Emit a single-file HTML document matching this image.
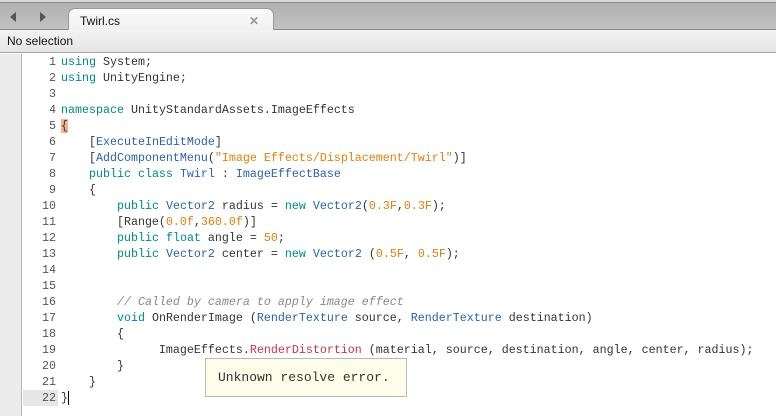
<!DOCTYPE html>
<html><head><meta charset="utf-8"><style>
*{margin:0;padding:0;box-sizing:border-box}
body{width:776px;height:416px;overflow:hidden;background:#fff;position:relative;font-family:"Liberation Sans",sans-serif}
#top{position:absolute;left:0;top:0;width:776px;height:30px;background:linear-gradient(#b0b0b0,#c2c2c2);border-top:2px solid #d8d8d8;box-shadow:inset 0 1px 0 #8a8a8a;border-bottom:1px solid #888}
#tab{position:absolute;left:68px;top:6px;width:206px;height:24px;background:linear-gradient(#fafafa,#f0f0f0);border:1px solid #999;border-bottom:none;border-radius:7px 7px 0 0;font-size:12px;color:#111;padding:5px 0 0 11px}
#tab .x{position:absolute;right:14px;top:5px;color:#999;font-weight:bold;font-size:12px}
.arr{position:absolute;top:10px;width:0;height:0;border-top:5px solid transparent;border-bottom:5px solid transparent}
#info{position:absolute;left:0;top:30px;width:776px;height:23px;background:linear-gradient(#f3f3f3,#e5e5e5);border-bottom:1px solid #a8a8a8;font-size:12px;color:#111;padding:4px 0 0 7px}
#gut{position:absolute;left:0;top:54px;width:22px;height:362px;background:#ececec;border-right:1px solid #b8b8b8}
#nums{position:absolute;left:23px;top:54px;width:33px;font:11.66px/16px "Liberation Mono",monospace;color:#555;text-align:right}
#hl{position:absolute;left:23px;top:390px;width:35px;height:16px;background:#e6e6e6}
#code{position:absolute;left:61px;top:54px;font:11.66px/16px "Liberation Mono",monospace;color:#333;white-space:pre}
.k{color:#00898a}.t{color:#2b61ad}.s{color:#e87d0c}.r{color:#c83444}.c{color:#888;font-style:italic}
.br{background:#f7b48a}
#tip{position:absolute;left:205px;top:358px;width:202px;height:39px;background:#fdfde9;border:1px solid #b8b8b8;font:13px "Liberation Mono",monospace;color:#333;padding:11px 0 0 12px}
#cur{position:absolute;left:68px;top:391px;width:1px;height:14px;background:#000}
</style></head><body>
<div id="top"><div class="arr" style="left:10px;border-right:6px solid #555"></div><div class="arr" style="left:40px;border-left:6px solid #555"></div>
<div id="tab">Twirl.cs<span class="x">✕</span></div></div>
<div id="info">No selection</div>
<div id="gut"></div>
<div id="hl"></div>
<div id="nums">1<br>2<br>3<br>4<br>5<br>6<br>7<br>8<br>9<br>10<br>11<br>12<br>13<br>14<br>15<br>16<br>17<br>18<br>19<br>20<br>21<br>22</div>
<div id="code"><span class="k">using</span> System;
<span class="k">using</span> UnityEngine;

<span class="k">namespace</span> UnityStandardAssets.ImageEffects
<span class="br">{</span>
    [<span class="t">ExecuteInEditMode</span>]
    [<span class="t">AddComponentMenu</span>(<span class="s">"Image Effects/Displacement/Twirl"</span>)]
    <span class="k">public class</span> <span class="t">Twirl</span> : <span class="t">ImageEffectBase</span>
    {
        <span class="k">public</span> <span class="t">Vector2</span> radius = <span class="k">new</span> <span class="t">Vector2</span>(<span class="s">0.3F</span>,<span class="s">0.3F</span>);
        [Range(<span class="s">0.0f</span>,<span class="s">360.0f</span>)]
        <span class="k">public</span> <span class="k">float</span> angle = <span class="s">50</span>;
        <span class="k">public</span> <span class="t">Vector2</span> center = <span class="k">new</span> <span class="t">Vector2</span> (<span class="s">0.5F</span>, <span class="s">0.5F</span>);


        <span class="c">// Called by camera to apply image effect</span>
        <span class="k">void</span> OnRenderImage (<span class="t">RenderTexture</span> source, <span class="t">RenderTexture</span> destination)
        {
              ImageEffects.<span class="r">RenderDistortion</span> (material, source, destination, angle, center, radius);
        }
    }
}</div>
<div id="cur"></div>
<div id="tip">Unknown resolve error.</div>
</body></html>
